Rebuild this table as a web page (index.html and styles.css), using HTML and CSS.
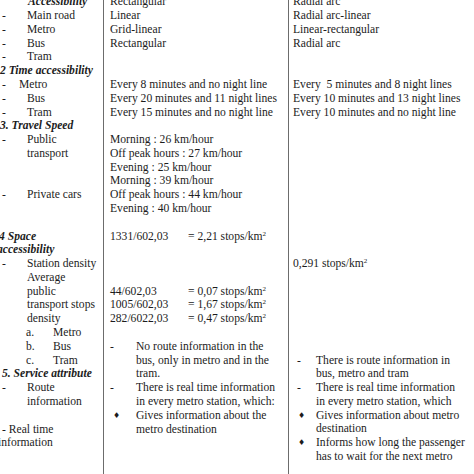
FILE: index.html
```html
<!DOCTYPE html>
<html>
<head>
<meta charset="utf-8">
<link rel="stylesheet" href="styles.css">
</head>
<body>
<div class="sheet">
  <div class="row">
    <div class="c c1"><div class="ln hd ind">Accessibility</div></div>
    <div class="c c2"><div class="ln">Rectangular</div></div>
    <div class="c c3"><div class="ln">Radial arc</div></div>
  </div>
  <div class="row">
    <div class="c c1"><div class="it"><span class="mk">-</span><span>Main road</span></div></div>
    <div class="c c2"><div class="ln">Linear</div></div>
    <div class="c c3"><div class="ln">Radial arc-linear</div></div>
  </div>
  <div class="row">
    <div class="c c1"><div class="it"><span class="mk">-</span><span>Metro</span></div></div>
    <div class="c c2"><div class="ln">Grid-linear</div></div>
    <div class="c c3"><div class="ln">Linear-rectangular</div></div>
  </div>
  <div class="row">
    <div class="c c1"><div class="it"><span class="mk">-</span><span>Bus</span></div></div>
    <div class="c c2"><div class="ln">Rectangular</div></div>
    <div class="c c3"><div class="ln">Radial arc</div></div>
  </div>
  <div class="row">
    <div class="c c1"><div class="it"><span class="mk">-</span><span>Tram</span></div></div>
    <div class="c c2"></div>
    <div class="c c3"></div>
  </div>
  <div class="row">
    <div class="c c1"><div class="ln hd">2 Time accessibility</div></div>
    <div class="c c2"></div>
    <div class="c c3"></div>
  </div>
  <div class="row">
    <div class="c c1"><div class="it"><span class="mk mk-n">-</span><span>Metro</span></div></div>
    <div class="c c2"><div class="ln">Every 8 minutes and no night line</div></div>
    <div class="c c3"><div class="ln">Every&nbsp; 5 minutes and 8 night lines</div></div>
  </div>
  <div class="row">
    <div class="c c1"><div class="it"><span class="mk">-</span><span>Bus</span></div></div>
    <div class="c c2"><div class="ln">Every 20 minutes and 11 night lines</div></div>
    <div class="c c3"><div class="ln">Every 10 minutes and 13 night lines</div></div>
  </div>
  <div class="row">
    <div class="c c1"><div class="it"><span class="mk">-</span><span>Tram</span></div></div>
    <div class="c c2"><div class="ln">Every 15 minutes and no night line</div></div>
    <div class="c c3"><div class="ln">Every 10 minutes and no night line</div></div>
  </div>
  <div class="row">
    <div class="c c1"><div class="ln hd">3. Travel Speed</div></div>
    <div class="c c2"><div class="ln"></div></div>
    <div class="c c3"></div>
  </div>
  <div class="row">
    <div class="c c1"><div class="it"><span class="mk">-</span><span><span class="ln">Public</span><span class="ln">transport</span></span></div></div>
    <div class="c c2">
      <div class="ln">Morning : 26 km/hour</div>
      <div class="ln">Off peak hours : 27 km/hour</div>
      <div class="ln">Evening : 25 km/hour</div>
    </div>
    <div class="c c3"></div>
  </div>
  <div class="row">
    <div class="c c1"><div class="ln"></div><div class="it"><span class="mk">-</span><span>Private cars</span></div></div>
    <div class="c c2">
      <div class="ln">Morning : 39 km/hour</div>
      <div class="ln">Off peak hours : 44 km/hour</div>
      <div class="ln">Evening : 40 km/hour</div>
    </div>
    <div class="c c3"></div>
  </div>
  <div class="row">
    <div class="c c1"><div class="ln"></div></div>
    <div class="c c2"></div>
    <div class="c c3"></div>
  </div>
  <div class="row">
    <div class="c c1"><div class="ln hd sp1">4 Space</div><div class="ln hd sp2">accessibility</div></div>
    <div class="c c2"><div class="ln"><span class="frac">1331/602,03</span>= 2,21 stops/km<sup>2</sup></div></div>
    <div class="c c3"></div>
  </div>
  <div class="row">
    <div class="c c1"><div class="it"><span class="mk">-</span><span>Station density</span></div></div>
    <div class="c c2"></div>
    <div class="c c3"><div class="ln">0,291 stops/km<sup>2</sup></div></div>
  </div>
  <div class="row">
    <div class="c c1 plain">
      <div class="ln">Average</div>
      <div class="ln">public</div>
      <div class="ln">transport stops</div>
      <div class="ln">density</div>
    </div>
    <div class="c c2">
      <div class="ln"></div>
      <div class="ln"><span class="frac">44/602,03</span>= 0,07 stops/km<sup>2</sup></div>
      <div class="ln"><span class="frac">1005/602,03</span>= 1,67 stops/km<sup>2</sup></div>
      <div class="ln"><span class="frac">282/6022,03</span>= 0,47 stops/km<sup>2</sup></div>
    </div>
    <div class="c c3"></div>
  </div>
  <div class="row last">
    <div class="c c1">
      <div class="it"><span class="mk mk-sub">a.</span><span>Metro</span></div>
      <div class="it"><span class="mk mk-sub">b.</span><span>Bus</span></div>
      <div class="it"><span class="mk mk-sub">c.</span><span>Tram</span></div>
      <div class="ln hd sv">5. Service attribute</div>
      <div class="it"><span class="mk">-</span><span><span class="ln">Route</span><span class="ln">information</span></span></div>
      <div class="ln"></div>
      <div class="ln">- Real time</div>
      <div class="ln info">information</div>
    </div>
    <div class="c c2">
      <div class="ln"></div>
      <div class="li"><span class="lm">-</span><span><span class="ln">No route information in the</span><span class="ln">bus, only in metro and in the</span><span class="ln">tram.</span></span></div>
      <div class="li"><span class="lm">-</span><span><span class="ln">There is real time information</span><span class="ln">in every metro station, which:</span></span></div>
      <div class="li"><span class="lm dia">&#9830;</span><span><span class="ln">Gives information about the</span><span class="ln">metro destination</span></span></div>
    </div>
    <div class="c c3">
      <div class="ln"></div>
      <div class="ln"></div>
      <div class="li"><span class="lm">-</span><span><span class="ln">There is route information in</span><span class="ln">bus, metro and tram</span></span></div>
      <div class="li"><span class="lm">-</span><span><span class="ln">There is real time information</span><span class="ln">in every metro station, which</span></span></div>
      <div class="li"><span class="lm dia">&#9830;</span><span><span class="ln">Gives information about metro</span><span class="ln">destination</span></span></div>
      <div class="li"><span class="lm dia">&#9830;</span><span><span class="ln">Informs how long the passenger</span><span class="ln">has to wait for the next metro</span></span></div>
    </div>
  </div>
</div>
</body>
</html>
```

FILE: styles.css
```css
html, body {
  margin: 0;
  padding: 0;
  background: #ffffff;
  overflow: hidden;
}

body {
  font-family: "Liberation Serif", "Times New Roman", serif;
  font-size: 11.6px;
  line-height: 13.78px;
  color: #1c1c1c;
}

.sheet {
  display: flex;
  flex-direction: column;
  margin-top: -4.7px;
  height: calc(100vh + 5px);
  width: 474px;
  overflow: hidden;
}

.row {
  display: grid;
  grid-template-columns: 103px 185px 186px;
}

.row.last {
  flex: 1;
}

.c {
  min-width: 0;
  white-space: nowrap;
}

.c1 {
  padding-left: 2px;
}

.c1.plain {
  padding-left: 27px;
}

.c2 {
  border-left: 1px solid #6c6c6c;
  padding-left: 6px;
}

.c3 {
  border-left: 1px solid #6c6c6c;
  padding-left: 4px;
}

.ln {
  display: block;
  min-height: 13.78px;
}

.hd {
  font-weight: bold;
  font-style: italic;
  margin-left: -2px;
}

.hd.ind {
  padding-left: 28px;
}

.hd.sp1 {
  margin-left: -3px;
}

.hd.sp2 {
  margin-left: -5px;
}

.hd.sv {
  margin-left: 0;
}

.info {
  margin-left: -4px;
}

.it {
  display: flex;
  min-height: 13.78px;
}

.mk {
  flex: none;
  width: 25px;
}

.mk-n {
  width: 17px;
}

.mk-sub {
  width: 27px;
  padding-left: 24px;
}

.frac {
  display: inline-block;
  width: 78px;
}

sup {
  font-size: 7px;
  line-height: 0;
  vertical-align: 4px;
}

.li {
  display: flex;
}

.c2 .lm {
  flex: none;
  width: 26px;
}

.c3 .lm {
  flex: none;
  width: 23px;
  padding-left: 4px;
  box-sizing: border-box;
}

.c3 .lm.dia {
  padding-left: 5px;
}

.c2 .lm.dia {
  padding-left: 3px;
  box-sizing: border-box;
}

.dia {
  font-family: "DejaVu Sans", sans-serif;
  font-size: 8px;
}
```
